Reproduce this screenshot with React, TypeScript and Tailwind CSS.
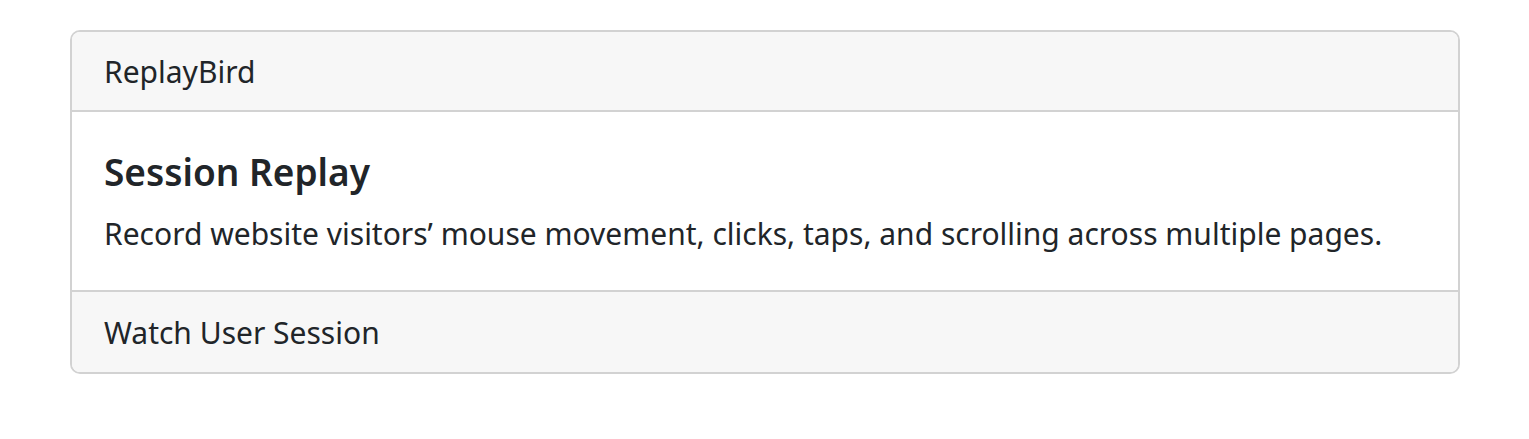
export default function App() {
  return (
    <div className="min-h-screen bg-white px-[70px] pt-[30px] pr-[69px] font-['Noto_Sans','Open_Sans',sans-serif] text-[#212529]">
      <div className="overflow-hidden rounded-[10px] border-2 border-[#d2d2d2] bg-white">
        <div className="border-b-2 border-[#d2d2d2] bg-[#f7f7f7] px-[32px] pt-[19px] pb-[17px] text-[30px] leading-[42px]">
          ReplayBird
        </div>
        <div className="px-[32px] pt-[37px] pb-[35px]">
          <h5 className="text-[37px] font-semibold leading-[46px]">Session Replay</h5>
          <p className="mt-[18px] text-[30px] leading-[42px]">
            Record website visitors’ mouse movement, clicks, taps, and scrolling across multiple pages.
          </p>
        </div>
        <div className="border-t-2 border-[#d2d2d2] bg-[#f7f7f7] px-[32px] pt-[19px] pb-[18px] text-[30px] leading-[43px]">
          Watch User Session
        </div>
      </div>
    </div>
  );
}
